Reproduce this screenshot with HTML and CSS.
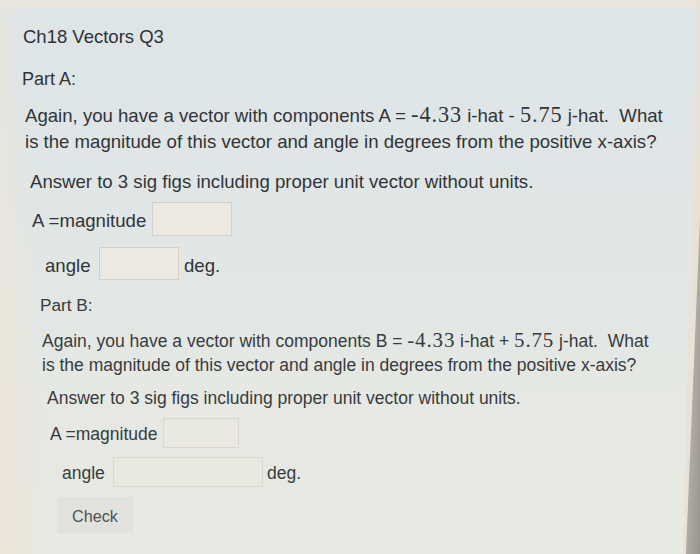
FILE: index.html
```html
<!DOCTYPE html>
<html lang="en">
<head>
<meta charset="utf-8">
<title>Ch18 Vectors Q3</title>
<link rel="stylesheet" href="styles.css">
</head>
<body>
<main class="screen">
  <h1 class="title">Ch18 Vectors Q3</h1>

  <section class="part part-a">
    <h2 class="part-label">Part A:</h2>
    <p class="question">Again, you have a vector with components A = <span class="num">-4.33</span> i-hat - <span class="num">5.75</span> j-hat.&nbsp; What<br>is the magnitude of this vector and angle in degrees from the positive x-axis?</p>
    <p class="hint">Answer to 3 sig figs including proper unit vector without units.</p>
    <div class="row row-mag">
      <label class="lbl" for="a-mag">A =magnitude</label>
      <input class="box" id="a-mag" type="text">
    </div>
    <div class="row row-ang">
      <label class="lbl" for="a-ang">angle</label>
      <input class="box" id="a-ang" type="text">
      <span class="unit">deg.</span>
    </div>
  </section>

  <section class="part part-b">
    <h2 class="part-label">Part B:</h2>
    <p class="question">Again, you have a vector with components B = <span class="num">-4.33</span> i-hat + <span class="num">5.75</span> j-hat.&nbsp; What<br>is the magnitude of this vector and angle in degrees from the positive x-axis?</p>
    <p class="hint">Answer to 3 sig figs including proper unit vector without units.</p>
    <div class="row row-mag">
      <label class="lbl" for="b-mag">A =magnitude</label>
      <input class="box" id="b-mag" type="text">
    </div>
    <div class="row row-ang">
      <label class="lbl" for="b-ang">angle</label>
      <input class="box" id="b-ang" type="text">
      <span class="unit">deg.</span>
    </div>
    <div class="actions">
      <button class="check" type="button">Check</button>
    </div>
  </section>
</main>
</body>
</html>
```

FILE: styles.css
```css
html, body {
  margin: 0;
  padding: 0;
}

body {
  width: 700px;
  height: 554px;
  overflow: hidden;
  font-family: "Liberation Sans", Arial, sans-serif;
  color: #313437;
  background:
    linear-gradient(92.4deg, rgba(0,0,0,0) 0, rgba(0,0,0,0) 708px, #b0aaa4 709px, #9a948f 722px),
    linear-gradient(91.45deg, rgba(0,0,0,0) 0, rgba(0,0,0,0) 696px, #e9e2d6 697px, #e6ded2 714px),
    linear-gradient(to bottom, #ebe6dd 0, #ebe6dd 5px, rgba(235,230,221,0) 11px),
    linear-gradient(87deg, rgba(236,229,216,0.95) 0, rgba(236,229,216,0.95) 10px, rgba(236,229,216,0) 48px),
    linear-gradient(to bottom, #dee5e7 0%, #e0e6e6 35%, #e5e8e3 70%, #e8e9e3 100%);
}

.screen {
  padding-top: 24px;
}

.title {
  margin: 0 0 0 23px;
  font-size: 18.5px;
  font-weight: normal;
  line-height: 26px;
  color: #2e3134;
}

.part-label {
  margin: 0;
  font-weight: normal;
}

.question,
.hint {
  margin: 0;
  white-space: nowrap;
}

.num {
  font-family: "Liberation Serif", "Times New Roman", serif;
  font-size: 1.2em;
  line-height: 1;
  letter-spacing: 0.04em;
}

.row {
  display: flex;
  align-items: flex-start;
}

.box {
  display: block;
  box-sizing: border-box;
  margin: 0;
  padding: 0;
  border: 1px solid #d3d0c8;
  background: #ebe9e2;
  font: inherit;
  outline: none;
}

/* ---- Part A ---- */
.part-a {
  font-size: 18.6px;
  line-height: 26px;
}

.part-a .part-label {
  margin: 16px 0 0 22px;
  font-size: 18px;
}

.part-a .question {
  margin: 11px 0 0 25px;
}

.part-a .hint {
  margin: 14px 0 0 30px;
}

.part-a .row-mag {
  margin: 7px 0 0 32px;
}

.part-a .row-mag .lbl {
  margin-top: 6px;
  width: 120px;
}

.part-a .row-mag .box {
  width: 80px;
  height: 34px;
}

.part-a .row-ang {
  margin: 11px 0 0 45px;
}

.part-a .row-ang .lbl {
  margin-top: 6px;
  width: 54px;
}

.part-a .row-ang .box {
  width: 80px;
  height: 33px;
}

.part-a .row-ang .unit {
  margin: 6px 0 0 5px;
}

/* ---- Part B ---- */
.part-b {
  font-size: 17.5px;
  line-height: 24px;
  color: #383b3e;
}

.part-b .part-label {
  margin: 13px 0 0 40px;
  font-size: 17.2px;
}

.part-b .question {
  margin: 12px 0 0 42px;
}

.part-b .hint {
  margin: 9px 0 0 47px;
}

.part-b .row-mag {
  margin: 8px 0 0 50px;
}

.part-b .row-mag .lbl {
  margin-top: 4px;
  width: 113px;
}

.part-b .row-mag .box {
  width: 76px;
  height: 30px;
  border-color: #dad7ce;
  background: #e9e8e1;
}

.part-b .row-ang {
  margin: 9px 0 0 62px;
}

.part-b .row-ang .lbl {
  margin-top: 4px;
  width: 51px;
}

.part-b .row-ang .box {
  width: 150px;
  height: 30px;
  border-color: #dad7ce;
  background: #e9e8e1;
}

.part-b .row-ang .unit {
  margin: 4px 0 0 4px;
}

.actions {
  margin: 10px 0 0 57px;
}

.check {
  display: block;
  width: 76px;
  height: 36px;
  box-sizing: border-box;
  margin: 0;
  padding: 7px 0 5px 15px;
  border: none;
  background: #e1e2dd;
  font-family: "Liberation Sans", Arial, sans-serif;
  font-size: 16.2px;
  line-height: 24px;
  text-align: left;
  color: #4f5255;
}
```
